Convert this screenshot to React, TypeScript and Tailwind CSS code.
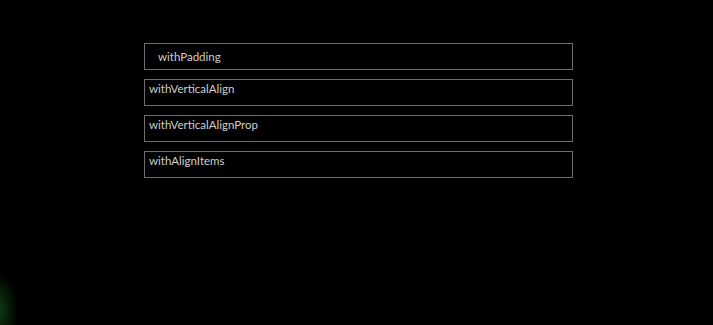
export default function App() {
  const rows = ["withVerticalAlign", "withVerticalAlignProp", "withAlignItems"];

  return (
    <div className="relative w-[713px] h-[325px] overflow-hidden bg-black font-['Lato',sans-serif]">
      {/* green glow in the corner */}
      <div className="absolute left-[-22px] top-[272px] w-[40px] h-[75px] rounded-full bg-[radial-gradient(closest-side,rgba(40,150,40,0.4),rgba(0,0,0,0))]" />

      <div className="flex flex-col gap-[9px] pl-[144px] pt-[43px]">
        <div className="w-[429px] h-[27px] border border-[#6e6e6e] flex items-center pl-[13px] text-[11.5px] text-[#cfcfcf]">
          withPadding
        </div>
        {rows.map((label) => (
          <div
            key={label}
            className="w-[429px] h-[27px] border border-[#6e6e6e] pl-[4px] pt-[1px] text-[11.5px] leading-[16px] text-[#cfcfcf]"
          >
            {label}
          </div>
        ))}
      </div>
    </div>
  );
}
